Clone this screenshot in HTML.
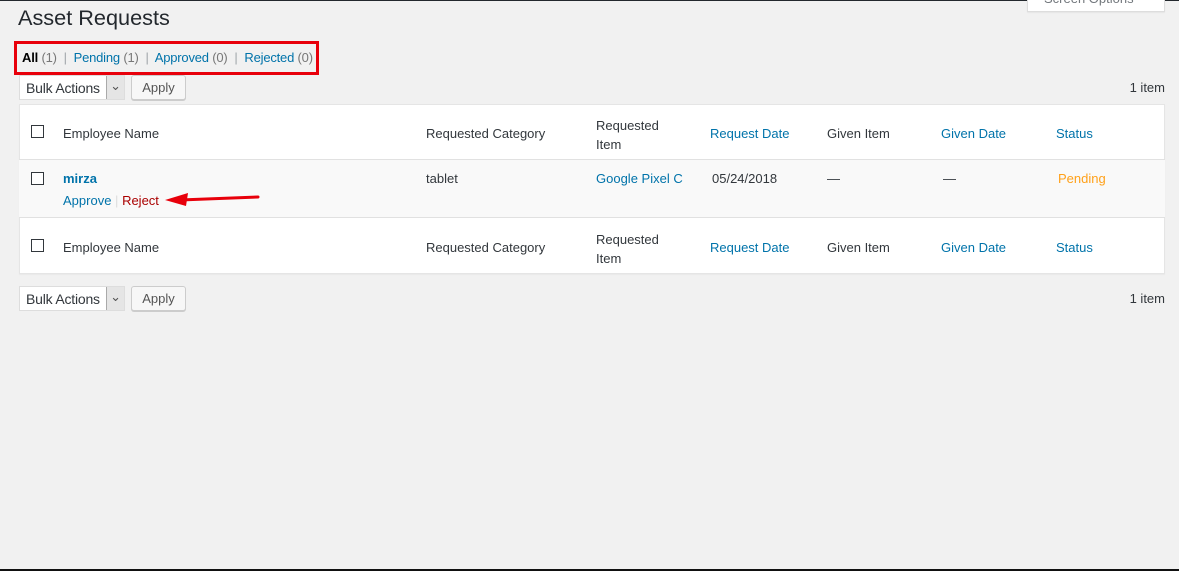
<!DOCTYPE html>
<html><head><meta charset="utf-8"><style>
*{box-sizing:border-box;margin:0;padding:0}
body{width:1179px;height:571px;background:#f1f1f1;font-family:"Liberation Sans",sans-serif;font-size:13px;color:#32373c;position:relative;overflow:hidden;border-top:1px solid #23282d;border-bottom:2px solid #111}
.a{position:absolute;white-space:nowrap}
.l{color:#0073aa}
.g{color:#777}
.sep{color:#a0a5aa}
.cb{position:absolute;width:13px;height:13px;border:1px solid #32373c;background:#fff}
.sel{position:absolute;width:106px;height:25px;border:1px solid #ddd;background:#fff;font-size:14px;padding:4px 0 0 6px;letter-spacing:-0.2px}
.sel .ar{position:absolute;right:0;top:0;width:18px;height:23px;background:#e5e5e5;border-left:1px solid #aaa;font-size:13px;text-align:center;line-height:20px;color:#555}
.btn{position:absolute;width:55px;height:25px;border:1px solid #ccc;border-radius:3px;background:#f7f7f7;box-shadow:0 1px 0 #ccc;text-align:center;font-size:13px;line-height:23px;color:#555}
.row{position:absolute;left:19px;width:1146px}
</style></head><body>
<div class="a" style="left:1027px;top:-1px;width:138px;height:12px;background:#fff;border:1px solid #ddd;border-top:none;box-shadow:0 1px 1px rgba(0,0,0,.05);overflow:hidden"><span style="position:absolute;left:16px;top:-9px;color:#72777c;font-size:13px">Screen Options</span></div>
<div class="a" style="left:18px;top:4px;font-size:21.7px;color:#23282d">Asset Requests</div>
<div class="a" style="left:14px;top:40px;width:305px;height:34px;border:3px solid #e8000b"></div>
<div class="a" style="left:22px;top:49px;letter-spacing:-0.2px;font-size:13px"><b style="color:#000;font-weight:600">All</b> <span class="g">(1)</span> <span class="sep">&nbsp;|&nbsp;</span> <span class="l">Pending</span> <span class="g">(1)</span> <span class="sep">&nbsp;|&nbsp;</span> <span class="l">Approved</span> <span class="g">(0)</span> <span class="sep">&nbsp;|&nbsp;</span> <span class="l">Rejected</span> <span class="g">(0)</span></div>
<div class="sel" style="left:19px;top:74px">Bulk Actions<span class="ar">&#8964;</span></div>
<div class="btn" style="left:131px;top:74px">Apply</div>
<div class="a" style="right:14px;top:79px">1 item</div>

<div class="row" style="top:103px;height:170px;background:#fff;border:1px solid #e5e5e5;box-shadow:0 1px 1px rgba(0,0,0,.04)"></div>
<div class="row" style="top:158px;height:59px;background:#f9f9f9;border-top:1px solid #e1e1e1;border-bottom:1px solid #e1e1e1"></div>

<div class="cb" style="left:31px;top:124px"></div>
<div class="a" style="left:63px;top:125px">Employee Name</div>
<div class="a" style="left:426px;top:125px">Requested Category</div>
<div class="a" style="left:596px;top:115px;line-height:19px">Requested<br>Item</div>
<div class="a l" style="left:710px;top:125px">Request Date</div>
<div class="a" style="left:827px;top:125px">Given Item</div>
<div class="a l" style="left:941px;top:125px">Given Date</div>
<div class="a l" style="left:1056px;top:125px">Status</div>

<div class="cb" style="left:31px;top:171px"></div>
<div class="a l" style="left:63px;top:170px;font-weight:bold">mirza</div>
<div class="a" style="left:63px;top:192px"><span class="l">Approve</span> <span style="color:#ddd">|</span> <span style="color:#a00">Reject</span></div>
<div class="a" style="left:426px;top:170px">tablet</div>
<div class="a l" style="left:596px;top:170px">Google Pixel C</div>
<div class="a" style="left:712px;top:170px">05/24/2018</div>
<div class="a" style="left:827px;top:170px">—</div>
<div class="a" style="left:943px;top:170px">—</div>
<div class="a" style="left:1058px;top:170px;color:#ffa11a">Pending</div>
<svg class="a" style="left:160px;top:189px" width="102" height="18"><path d="M98 7 L20 10" stroke="#e8000b" stroke-width="3" stroke-linecap="round" fill="none"/><path d="M5 10 L28 3 L26 16 Z" fill="#e8000b"/></svg>

<div class="cb" style="left:31px;top:238px"></div>
<div class="a" style="left:63px;top:239px">Employee Name</div>
<div class="a" style="left:426px;top:239px">Requested Category</div>
<div class="a" style="left:596px;top:229px;line-height:19px">Requested<br>Item</div>
<div class="a l" style="left:710px;top:239px">Request Date</div>
<div class="a" style="left:827px;top:239px">Given Item</div>
<div class="a l" style="left:941px;top:239px">Given Date</div>
<div class="a l" style="left:1056px;top:239px">Status</div>

<div class="sel" style="left:19px;top:285px">Bulk Actions<span class="ar">&#8964;</span></div>
<div class="btn" style="left:131px;top:285px">Apply</div>
<div class="a" style="right:14px;top:290px">1 item</div>
</body></html>
